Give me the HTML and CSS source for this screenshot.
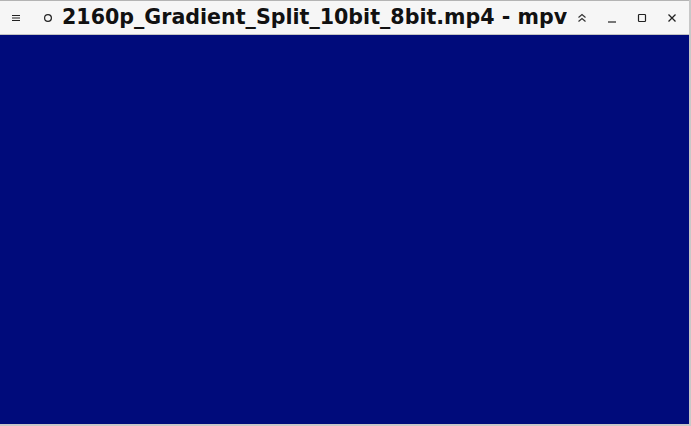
FILE: index.html
```html
<!DOCTYPE html>
<html>
<head>
<meta charset="utf-8">
<link rel="stylesheet" href="styles.css">
</head>
<body>
<div class="window">
  <div class="titlebar">
    <svg class="ico menu" width="10" height="8" viewBox="0 0 10 8"><path d="M1 1.5H9M1 4H9M1 6.5H9" stroke="#222" stroke-width="1.2" fill="none"/></svg>
    <svg class="ico dot" width="10" height="10" viewBox="0 0 10 10"><circle cx="5" cy="5" r="3.4" stroke="#222" stroke-width="1.2" fill="none"/></svg>
    <div class="title">2160p_Gradient_Split_10bit_8bit.mp4 - mpv</div>
    <div class="buttons">
      <div class="btn"><svg class="ico" width="10" height="10" viewBox="0 0 10 10"><path d="M1.5 4.5L5 1.5L8.5 4.5M1.5 8.5L5 5.5L8.5 8.5" stroke="#333" stroke-width="1.2" fill="none"/></svg></div>
      <div class="btn"><svg class="ico" width="10" height="10" viewBox="0 0 10 10"><path d="M1 9H9" stroke="#222" stroke-width="1.2" fill="none"/></svg></div>
      <div class="btn"><svg class="ico" width="10" height="10" viewBox="0 0 10 10"><rect x="1.5" y="1.5" width="7" height="7" rx="0.8" stroke="#222" stroke-width="1.2" fill="none"/></svg></div>
      <div class="btn"><svg class="ico" width="10" height="10" viewBox="0 0 10 10"><path d="M1.5 1.5L8.5 8.5M8.5 1.5L1.5 8.5" stroke="#222" stroke-width="1.3" fill="none"/></svg></div>
    </div>
  </div>
  <div class="video"></div>
</div>
</body>
</html>
```
FILE: styles.css
```css
html, body {
  margin: 0;
  padding: 0;
  background: #d0d0d0;
  width: 691px;
  height: 426px;
  overflow: hidden;
}
.window {
  width: 689px;
  height: 424px;
  display: flex;
  flex-direction: column;
  border-right: 2px solid #c8c8c8;
  border-bottom: 2px solid #c8c8c8;
  box-sizing: content-box;
}
.titlebar {
  height: 33px;
  flex: none;
  background: #f6f6f6;
  border-top: 1px solid #b4b4b4;
  border-bottom: 1px solid #c4c4c4;
  display: flex;
  align-items: center;
  font-family: "DejaVu Sans", sans-serif;
}
.ico { flex: none; display: block; }
.menu { margin-left: 11px; }
.dot { margin-left: 22px; }
.title {
  flex: 1;
  min-width: 0;
  margin-left: 9px;
  font-weight: bold;
  font-size: 20.6px;
  color: #111;
  white-space: nowrap;
  overflow: hidden;
  line-height: 33px;
}
.buttons {
  display: flex;
  margin-right: 2px;
}
.btn {
  width: 30px;
  height: 33px;
  display: flex;
  align-items: center;
  justify-content: center;
}
.video {
  flex: 1;
  background: #000b7b;
}
```
